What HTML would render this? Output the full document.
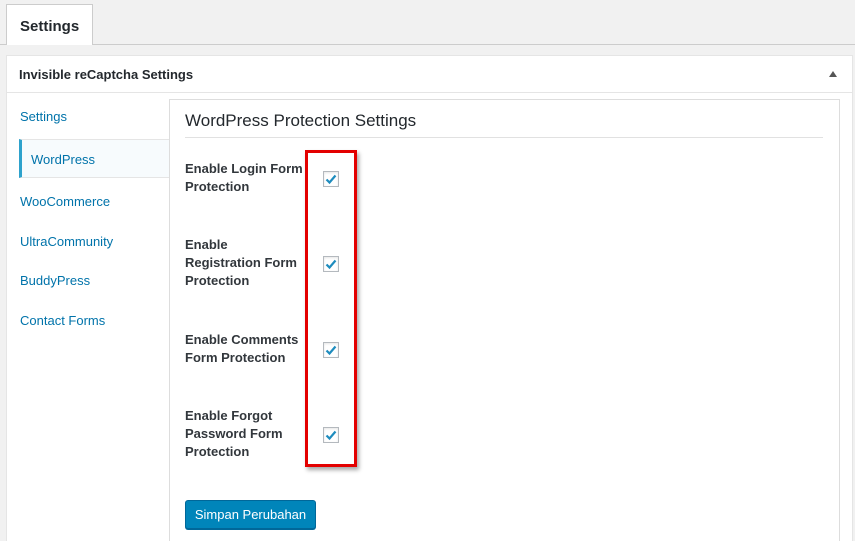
<!DOCTYPE html>
<html style="width:855px;height:541px;overflow:hidden"><head><style>
*{box-sizing:border-box;margin:0;padding:0}
body{width:855px;height:541px;background:#f1f1f1;font-family:"Liberation Sans",sans-serif;position:relative;overflow:hidden;color:#23282d}
.a{position:absolute}
.tab{left:6px;top:4px;width:87px;height:41px;background:#fff;border:1px solid #ccc;border-bottom:none;font-weight:bold;font-size:15px;padding:13px 0 0 13px}
.tabline{left:0;top:44px;width:855px;height:1px;background:#ccc}
.box{left:6px;top:55px;width:847px;height:486px;background:#fff;border:1px solid #e5e5e5;border-bottom:none}
.hdr{left:19px;top:67px;font-size:13px;font-weight:bold}
.hline{left:7px;top:92px;width:845px;height:1px;background:#e5e5e5}
.tri{left:829px;top:71px;width:0;height:0;border-left:4px solid transparent;border-right:4px solid transparent;border-bottom:6px solid #555}
.nav{left:20px;font-size:13px;color:#0073aa}
.act{left:19px;top:139px;width:151px;height:39px;background:#f7fbfd;border-left:3px solid #2ea2cc;border-top:1px solid #e5e5e5;border-bottom:1px solid #e5e5e5;font-size:13px;color:#0073aa;padding:12px 0 0 9px}
.cont{left:169px;top:99px;width:671px;height:442px;background:#fff;border:1px solid #ddd;border-bottom:none}
.h2{left:185px;top:111px;font-size:17px;color:#23282d}
.h2line{left:185px;top:137px;width:638px;height:1px;background:#e1e1e1}
.lbl{left:185px;font-size:13px;font-weight:bold;line-height:18px;width:125px;color:#32373c}
.cb{left:323px;width:16px;height:16px;border:1px solid #b4b9be;background:#fff;box-shadow:inset 0 1px 2px rgba(0,0,0,.1)}
.cb svg{position:absolute;left:1px;top:1px}
.red{left:305px;top:150px;width:52px;height:317px;border:3px solid #e30000;box-shadow:2px 3px 4px rgba(0,0,0,.35)}
.btn{left:185px;top:500px;width:131px;height:29px;background:#0085ba;border:1px solid #006799;border-radius:3px;color:#fff;font-size:13px;text-align:center;line-height:27px;box-shadow:0 1px 0 #006799}
</style></head><body>
<div class="a tabline"></div>
<div class="a tab">Settings</div>
<div class="a box"></div>
<div class="a hdr">Invisible reCaptcha Settings</div>
<div class="a tri"></div>
<div class="a hline"></div>
<div class="a nav" style="top:109px">Settings</div>
<div class="a act">WordPress</div>
<div class="a nav" style="top:194px">WooCommerce</div>
<div class="a nav" style="top:234px">UltraCommunity</div>
<div class="a nav" style="top:273px">BuddyPress</div>
<div class="a nav" style="top:313px">Contact Forms</div>
<div class="a cont"></div>
<div class="a h2">WordPress Protection Settings</div>
<div class="a h2line"></div>
<div class="a lbl" style="top:160px">Enable Login Form<br>Protection</div>
<div class="a lbl" style="top:236px">Enable<br>Registration Form<br>Protection</div>
<div class="a lbl" style="top:331px">Enable Comments<br>Form Protection</div>
<div class="a lbl" style="top:407px">Enable Forgot<br>Password Form<br>Protection</div>
<div class="a cb" style="top:171px"><svg width="12" height="12" viewBox="0 0 12 12"><path d="M1.5 6.5 L4.5 9.5 L10.5 2.5" stroke="#1e8cbe" stroke-width="2.2" fill="none"/></svg></div>
<div class="a cb" style="top:256px"><svg width="12" height="12" viewBox="0 0 12 12"><path d="M1.5 6.5 L4.5 9.5 L10.5 2.5" stroke="#1e8cbe" stroke-width="2.2" fill="none"/></svg></div>
<div class="a cb" style="top:342px"><svg width="12" height="12" viewBox="0 0 12 12"><path d="M1.5 6.5 L4.5 9.5 L10.5 2.5" stroke="#1e8cbe" stroke-width="2.2" fill="none"/></svg></div>
<div class="a cb" style="top:427px"><svg width="12" height="12" viewBox="0 0 12 12"><path d="M1.5 6.5 L4.5 9.5 L10.5 2.5" stroke="#1e8cbe" stroke-width="2.2" fill="none"/></svg></div>
<div class="a red"></div>
<div class="a btn">Simpan Perubahan</div>
</body></html>
